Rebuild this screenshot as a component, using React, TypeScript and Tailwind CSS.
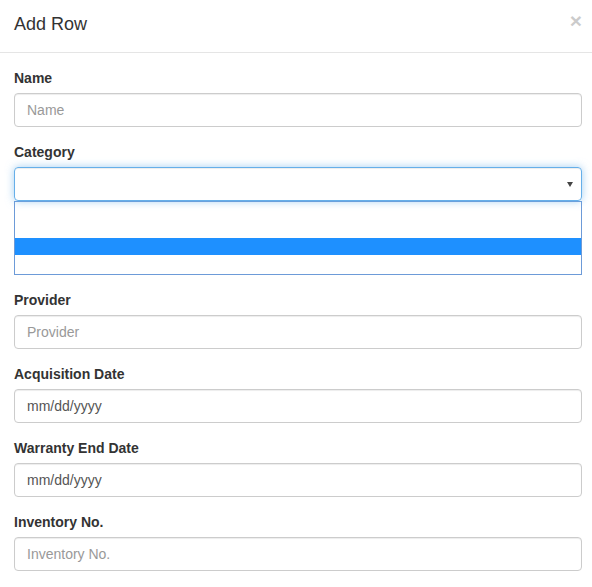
import React from 'react';

const font = { fontFamily: '"Liberation Sans", Arial, Helvetica, sans-serif' };

const Label: React.FC<{ children: React.ReactNode }> = ({ children }) => (
  <label className="block mb-[5px] text-[14px] leading-[20px] font-bold text-[#333]">{children}</label>
);

const TextField: React.FC<{ placeholder: string }> = ({ placeholder }) => (
  <input
    type="text"
    placeholder={placeholder}
    className="block w-full h-[34px] px-3 border border-[#ccc] rounded-[4px] text-[14px] text-[#555] placeholder:text-[#999] shadow-[inset_0_1px_1px_rgba(0,0,0,0.075)] outline-none"
  />
);

const DateField: React.FC = () => (
  <div className="flex items-center w-full h-[34px] px-3 border border-[#ccc] rounded-[4px] text-[14px] text-[#555] shadow-[inset_0_1px_1px_rgba(0,0,0,0.075)]">
    mm/dd/yyyy
  </div>
);

export default function App() {
  return (
    <div className="w-[592px] h-[587px] bg-white overflow-hidden" style={font}>
      <div className="flex items-start justify-between h-[53px] px-[14px] border-b border-[#e5e5e5]">
        <h4 className="mt-[13px] text-[18px] leading-[22px] text-[#333]">Add Row</h4>
        <span className="mt-[10px] mr-[-4px] text-[21px] font-bold leading-[21px] text-black opacity-20">×</span>
      </div>

      <div className="px-[14px] pt-[15px] pr-[10px]">
        <div className="mb-[15px]">
          <Label>Name</Label>
          <TextField placeholder="Name" />
        </div>

        <div className="mb-[15px]">
          <Label>Category</Label>
          <div className="relative flex items-center h-[34px] px-3 border border-[#66afe9] rounded-[4px] shadow-[inset_0_1px_1px_rgba(0,0,0,0.075),0_0_8px_rgba(102,175,233,0.6)]">
            <span className="absolute right-[8px] top-[14px] w-0 h-0 border-l-[3px] border-r-[3px] border-t-[5px] border-l-transparent border-r-transparent border-t-[#444]" />
          </div>
          <div className="flex flex-col h-[74px] border border-[#6d9bd8]">
            <div className="h-[36px]" />
            <div className="h-[17px] bg-[#1e90ff]" />
            <div className="flex-1" />
          </div>
        </div>

        <div className="mb-[15px]">
          <Label>Provider</Label>
          <TextField placeholder="Provider" />
        </div>

        <div className="mb-[15px]">
          <Label>Acquisition Date</Label>
          <DateField />
        </div>

        <div className="mb-[15px]">
          <Label>Warranty End Date</Label>
          <DateField />
        </div>

        <div className="mb-[15px]">
          <Label>Inventory No.</Label>
          <TextField placeholder="Inventory No." />
        </div>
      </div>
    </div>
  );
}
